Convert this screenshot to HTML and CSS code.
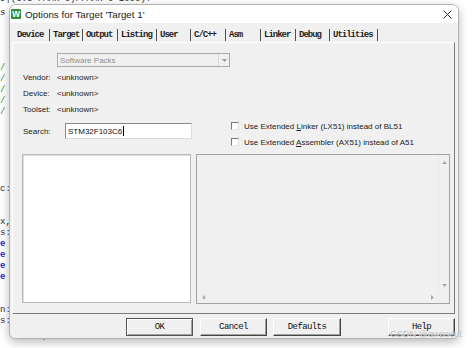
FILE: index.html
```html
<!DOCTYPE html>
<html>
<head>
<meta charset="utf-8">
<link rel="stylesheet" href="styles.css">
</head>
<body>
<div class="editor">
  <div class="code-top"><span>9|(3.3=FAMR 0)/FAMR 0*1000)!</span></div>
<pre class="code-strip">s




<span class="cm">/ 初</span>
<span class="cm">/ 配</span>
<span class="cm">/ 设</span>
<span class="cm">/ 使</span>
<span class="cm">/ 开</span>






c:


x,
s:
<span class="kw">e</span>
<span class="kw">e</span>
<span class="kw">e</span>
<span class="kw">e</span>


n:
s:</pre>
  <div class="code-bottom">|</div>
</div>

<div class="dialog">
  <div class="titlebar">
    <svg class="app-icon" width="10" height="10" viewBox="0 0 10 10">
      <rect width="10" height="10" rx="1" fill="#2f8f3a"/>
      <text x="5" y="8.4" text-anchor="middle" font-family="Liberation Sans, sans-serif" font-weight="bold" font-size="8.5" fill="#fff">W</text>
    </svg>
    <span class="title">Options for Target 'Target 1'</span>
    <svg class="close" width="9" height="9" viewBox="0 0 9 9">
      <path d="M0.5 0.5 L8.5 8.5 M8.5 0.5 L0.5 8.5" stroke="#2a2a2a" stroke-width="1" fill="none"/>
    </svg>
  </div>
  <div class="client">
    <div class="tabs">
      <span class="tab">Device</span>
      <span class="tab">Target</span>
      <span class="tab">Output</span>
      <span class="tab">Listing</span>
      <span class="tab">User</span>
      <span class="tab">C/C++</span>
      <span class="tab">Asm</span>
      <span class="tab">Linker</span>
      <span class="tab">Debug</span>
      <span class="tab">Utilities</span>
    </div>
    <div class="panel">
      <div class="combo">
        <span>Software Packs</span>
        <span class="combo-btn">
          <svg width="5" height="3" viewBox="0 0 5 3"><path d="M0 0 H5 L2.5 3 Z" fill="#9a9a9a"/></svg>
        </span>
      </div>
      <div class="mid">
        <div class="mid-left">
          <div class="info-row"><span>Vendor:</span><span>&lt;unknown&gt;</span></div>
          <div class="info-row"><span>Device:</span><span>&lt;unknown&gt;</span></div>
          <div class="info-row"><span>Toolset:</span><span>&lt;unknown&gt;</span></div>
          <div class="search-row">
            <span class="search-label">Search:</span>
            <div class="search-input"><span>STM32F103C6</span><span class="caret"></span></div>
          </div>
        </div>
        <div class="mid-right">
          <div class="check-row"><span class="checkbox"></span><span>Use Extended <u>L</u>inker (LX51) instead of BL51</span></div>
          <div class="check-row"><span class="checkbox"></span><span>Use Extended <u>A</u>ssembler (AX51) instead of A51</span></div>
        </div>
      </div>
      <div class="lists">
        <div class="listbox"></div>
        <div class="desc">
          <div class="desc-body"></div>
          <div class="vbar">
            <span class="arrow-box"><svg width="5" height="3" viewBox="0 0 5 3"><path d="M0 3 H5 L2.5 0 Z" fill="#a8a8a8"/></svg></span>
            <span class="arrow-box"><svg width="5" height="3" viewBox="0 0 5 3"><path d="M0 0 H5 L2.5 3 Z" fill="#a8a8a8"/></svg></span>
          </div>
          <div class="hbar">
            <span class="arrow-box h"><svg width="3" height="5" viewBox="0 0 3 5"><path d="M3 0 V5 L0 2.5 Z" fill="#a8a8a8"/></svg></span>
            <span class="arrow-box h"><svg width="3" height="5" viewBox="0 0 3 5"><path d="M0 0 V5 L3 2.5 Z" fill="#a8a8a8"/></svg></span>
          </div>
          <div class="corner"></div>
        </div>
      </div>
    </div>
    <div class="buttons">
      <button class="btn btn-default">OK</button>
      <button class="btn btn-cancel">Cancel</button>
      <button class="btn btn-defaults">Defaults</button>
      <button class="btn btn-help">Help</button>
    </div>
  </div>
</div>

<div class="watermark">CSDN @gwpscut</div>
</body>
</html>
```

FILE: styles.css
```css
* { box-sizing: border-box; }

html, body {
  margin: 0;
  padding: 0;
}

body {
  width: 474px;
  height: 348px;
  overflow: hidden;
  background: #ffffff;
  position: relative;
  font-family: "Liberation Sans", Arial, sans-serif;
}

/* background code editor */
.editor {
  font: 9px/11px "Liberation Mono", "Noto Sans CJK SC", monospace;
  color: #2b2b2b;
}
.code-top {
  height: 4px;
  overflow: hidden;
  white-space: pre;
}
.code-top span {
  display: block;
  margin-top: -6px;
}
.code-strip {
  margin: 3.5px 0 0 0;
  width: 20px;
  overflow: hidden;
  font: inherit;
  white-space: pre;
}
.code-bottom {
  margin: 4px 0 0 41px;
  color: #555555;
}
.cm { color: #2f9a3a; }
.kw { color: #2b2bd8; font-weight: bold; }

/* dialog window */
.dialog {
  position: absolute;
  left: 9px;
  top: 4px;
  width: 450px;
  height: 335px;
  border: 1px solid #b3b3b3;
  border-radius: 7px 7px 6px 6px;
  background: #f0f0f0;
  box-shadow: 0 3px 10px rgba(0, 0, 0, 0.28);
  overflow: hidden;
  display: flex;
  flex-direction: column;
}

.titlebar {
  flex: none;
  height: 18px;
  background: #ffffff;
  display: flex;
  align-items: center;
  padding-left: 1px;
}
.app-icon { display: block; flex: none; }
.title {
  margin-left: 4px;
  font-size: 9.8px;
  color: #1a1a1a;
}
.close {
  display: block;
  margin-left: auto;
  margin-right: 6px;
}

.client {
  flex: 1;
  padding-top: 6px;
}

.tabs {
  display: grid;
  grid-template-columns: 36px 33px 35px 39px 34px 35px 35px 35px 34px 48px;
  margin-left: 4px;
  height: 12px;
  font: bold 9px/12px "Liberation Mono", monospace;
  letter-spacing: -1px;
  color: #1e1e1e;
}
.tab {
  border-right: 1px solid #4e4e4e;
  padding-left: 3px;
  white-space: nowrap;
}

.panel {
  margin: 1px 0 0 2px;
  width: 443px;
  height: 272px;
  border-top: 1px solid #ffffff;
  border-left: 1px solid #ffffff;
  border-right: 1px solid #7c7c7c;
  border-bottom: 1px solid #7c7c7c;
  padding: 10px 0 0 9px;
  font-size: 8px;
  color: #222222;
}

.combo {
  margin-left: 35px;
  width: 173px;
  height: 14px;
  border: 1px solid #a9a9a9;
  background: #f0f0f0;
  display: flex;
  align-items: center;
  padding-left: 2px;
  color: #8e8e8e;
}
.combo-btn {
  margin-left: auto;
  width: 11px;
  height: 12px;
  border-left: 1px solid #d6d6d6;
  display: flex;
  align-items: center;
  justify-content: center;
}
.combo-btn svg { display: block; }

.mid {
  display: grid;
  grid-template-columns: 208px auto;
  height: 85px;
  margin-top: 2px;
}

.info-row {
  display: grid;
  grid-template-columns: 34px auto;
  align-items: center;
  height: 16px;
  padding-left: 1px;
}

.search-row {
  display: flex;
  align-items: center;
  margin-top: 6px;
  padding-left: 1px;
}
.search-label { width: 42px; }
.search-input {
  width: 127px;
  height: 16px;
  border: 1px solid;
  border-color: #8a8a8a #dcdcdc #dcdcdc #8a8a8a;
  background: #ffffff;
  padding-left: 2px;
  display: flex;
  align-items: center;
  color: #111111;
}
.caret {
  width: 1px;
  height: 10px;
  background: #000000;
  margin-left: 1px;
}

.mid-right {
  padding: 49px 0 0 1px;
}
.check-row {
  display: flex;
  align-items: center;
  height: 16px;
  white-space: nowrap;
}
.checkbox {
  width: 8px;
  height: 8px;
  border: 1px solid;
  border-color: #7a7a7a #e4e4e4 #e4e4e4 #7a7a7a;
  background: #ffffff;
  margin-right: 5px;
  flex: none;
}

.lists {
  display: flex;
  gap: 5px;
}
.listbox {
  width: 169px;
  height: 149px;
  background: #ffffff;
  border: 1px solid #b9b9b9;
  box-shadow: inset 1px 1px 0 #dedede;
}
.desc {
  width: 254px;
  height: 150px;
  border: 1px solid #a3a3a3;
  background: #f0f0f0;
  display: grid;
  grid-template-columns: 1fr 11px;
  grid-template-rows: 1fr 11px;
}
.vbar {
  display: flex;
  flex-direction: column;
  justify-content: space-between;
  border-left: 1px solid #e8e8e8;
}
.hbar {
  display: flex;
  justify-content: space-between;
}
.arrow-box {
  height: 14px;
  display: flex;
  align-items: center;
  justify-content: center;
}
.arrow-box.h {
  width: 12px;
  height: 11px;
}
.arrow-box svg { display: block; }

.buttons {
  display: flex;
  margin: 4px 0 0 116px;
}
.btn {
  width: 67px;
  height: 18px;
  padding: 0;
  margin: 0;
  font: 9px/1 "Liberation Mono", monospace;
  letter-spacing: -0.6px;
  color: #111111;
  background: #f0f0f0;
  border: 1px solid;
  border-color: #ffffff #444444 #444444 #ffffff;
  box-shadow: inset -1px -1px 0 #a0a0a0;
}
.btn-default {
  border-color: #555555;
  box-shadow: inset 1px 1px 0 #ffffff, inset -1px -1px 0 #a0a0a0;
}
.btn-cancel { margin-left: 7px; }
.btn-defaults { margin-left: 6px; width: 68px; }
.btn-help { margin-left: 47px; }

.watermark {
  position: absolute;
  left: 390px;
  top: 329px;
  font-size: 9.2px;
  color: #bcbcbc;
  text-shadow: 0 0 1px #ffffff;
  white-space: nowrap;
}
```
